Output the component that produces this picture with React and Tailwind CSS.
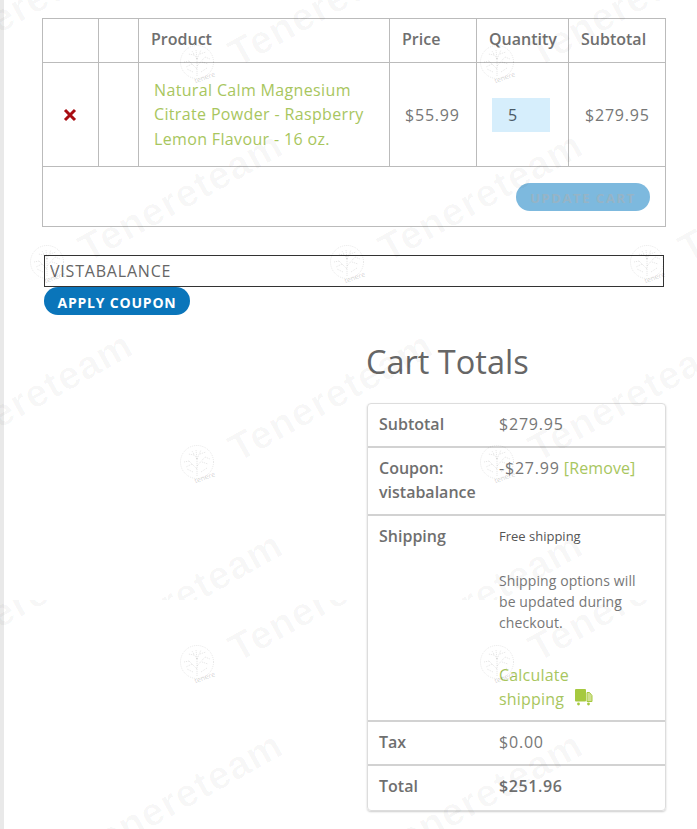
const FONT = { fontFamily: '"Open Sans", sans-serif' }

// watermark tiles are clipped at y=600 in the reference
const TEXT_TOP = [[-70, 55], [230, 55], [530, 55], [80, 250], [380, 250], [680, 250], [-70, 450], [230, 450], [530, 450], [80, 650], [380, 650]]
const TEXT_BOTTOM = [[-70, 650], [230, 650], [530, 650], [80, 850], [380, 850]]
const SEALS = [[197, 62], [497, 62], [47, 262], [347, 262], [647, 262], [197, 462], [497, 462], [197, 662], [497, 662]]

function WatermarkText({ x, y, clipTop = 0 }) {
  return (
    <span
      className="absolute origin-bottom-left -rotate-[29deg] whitespace-nowrap text-[39px] leading-none font-bold tracking-[1px] text-black/[0.03]"
      style={{ left: x + 11, top: y - 21 - clipTop, fontFamily: '"Liberation Sans", sans-serif' }}
    >
      Tenereteam
    </span>
  )
}

function Seal({ x, y }) {
  return (
    <div className="absolute h-[44px] w-[40px]" style={{ left: x - 17, top: y - 17 }}>
      <svg width="34" height="34" viewBox="0 0 34 34" fill="none" stroke="#000" strokeOpacity="0.16" strokeWidth="0.6">
        <circle cx="17" cy="17" r="16.5" strokeDasharray="1 1" />
        <path
          d="M17 31V14M17 24l-8-8M17 21l8-9M17 14l-5-8M17 14l4-9M9 16l-5 1M25 12l5 2M13 27l-6-3M21 27l6-4M12 19l-6 3M22 17l6 2M14 10l-6-1M20 9l6-2M17 14l-1-9"
          strokeDasharray="1.2 0.8"
        />
      </svg>
      <span className="absolute top-[29px] left-[14px] -rotate-[20deg] text-[7px] leading-none text-black/20">tenere</span>
    </div>
  )
}

function Watermarks() {
  return (
    <div className="pointer-events-none absolute inset-0 overflow-hidden">
      <div className="absolute top-0 left-0 h-[600px] w-full overflow-hidden">
        {TEXT_TOP.map(([x, y]) => <WatermarkText key={`${x}-${y}`} x={x} y={y} />)}
      </div>
      <div className="absolute top-[600px] left-0 h-[229px] w-full overflow-hidden">
        {TEXT_BOTTOM.map(([x, y]) => <WatermarkText key={`${x}-${y}`} x={x} y={y} clipTop={600} />)}
      </div>
      {SEALS.map(([x, y]) => <Seal key={`${x}-${y}`} x={x} y={y} />)}
    </div>
  )
}

function TruckIcon() {
  return (
    <svg className="ml-[6px] inline-block align-[-1px]" width="18" height="17" viewBox="0 0 18 17">
      <rect x="0" y="0" width="11" height="12.5" rx="1" fill="#a6c93f" />
      <path d="M12 3.5h2.5L17 6.5v6h-5z" fill="#cfe08f" stroke="#a6c93f" strokeWidth="1" />
      <circle cx="3.5" cy="15" r="1.4" fill="#a6c93f" />
      <circle cx="13.5" cy="15" r="1.4" fill="#a6c93f" />
    </svg>
  )
}

function CartTable() {
  const th = 'border-[1.5px] border-[#bbb] pb-[3px] text-left font-semibold text-[16px] text-[#6f6f6f] align-middle'
  const td = 'border-[1.5px] border-[#bbb] align-middle text-[16px] text-[#777]'
  return (
    <table className="ml-[42px] w-[623px] table-fixed border-collapse">
      <colgroup>
        <col className="w-[56px]" />
        <col className="w-[40px]" />
        <col className="w-[251px]" />
        <col className="w-[87px]" />
        <col className="w-[92px]" />
        <col className="w-[97px]" />
      </colgroup>
      <thead>
        <tr className="h-[44px]">
          <th className={th}></th>
          <th className={th}></th>
          <th className={`${th} pl-3`}>Product</th>
          <th className={`${th} pl-3`}>Price</th>
          <th className={`${th} pl-3`}>Quantity</th>
          <th className={`${th} pl-3`}>Subtotal</th>
        </tr>
      </thead>
      <tbody>
        <tr className="h-[104px]">
          <td className={`${td} pr-[2px] text-center`}>
            <svg className="mx-auto" width="14" height="14" viewBox="0 0 14 14" stroke="#a80d12" strokeWidth="3" fill="none">
              <path d="M2 2l10 10M12 2L2 12" />
            </svg>
          </td>
          <td className={td}></td>
          <td className={`${td} pl-[15px] pr-2 leading-[24.5px] tracking-[0.35px] text-[#a8c65e]`}>
            Natural Calm Magnesium Citrate Powder - Raspberry Lemon Flavour - 16 oz.
          </td>
          <td className={`${td} pl-[15px] tracking-[0.8px]`}>$55.99</td>
          <td className={`${td} pl-[15px]`}>
            <input
              readOnly
              value="5"
              className="block h-[34px] w-[58px] bg-[#d6eefc] pl-4 text-[16px] text-[#4b5a66] outline-none"
            />
          </td>
          <td className={`${td} pl-4 tracking-[0.8px]`}>$279.95</td>
        </tr>
        <tr className="h-[60px]">
          <td colSpan={6} className="border-[1.5px] border-[#bbb] pr-[15px] align-middle">
            <div className="flex justify-end">
              <button className="h-[28px] w-[134px] rounded-full bg-[#7db9de] pt-[4px] text-[13px] font-bold tracking-[1.6px] text-[#96b4c6]">
                UPDATE CART
              </button>
            </div>
          </td>
        </tr>
      </tbody>
    </table>
  )
}

function CouponForm() {
  return (
    <div className="mt-[28px] ml-[44px] flex flex-col items-start">
      <input
        readOnly
        value="VISTABALANCE"
        className="block h-[32px] w-[620px] border border-[#333] bg-white pl-[5px] text-[16px] tracking-[0.8px] text-[#666] outline-none"
      />
      <button className="h-[28px] w-[146px] rounded-full bg-[#0a75ba] pt-[2px] text-[14px] font-bold tracking-[0.8px] text-white">
        APPLY COUPON
      </button>
    </div>
  )
}

function TotalRow({ label, height, children, last }) {
  return (
    <div className={`flex pt-2 ${last ? '' : 'border-b-2 border-[#d2d2d2]'}`} style={{ height }}>
      <div className="w-[131px] pl-[11px] text-[16px] leading-[24px] font-semibold text-[#6f6f6f]">{label}</div>
      <div className="flex-1 text-[16px] leading-[24px] text-[#777]">{children}</div>
    </div>
  )
}

function CartTotals() {
  return (
    <div className="mt-[28px] ml-[367px] w-[299px]">
      <h2 className="-ml-px text-[32.5px] leading-[38px] text-[#666]">Cart Totals</h2>
      <div className="mt-[22px] rounded-[4px] border border-[#ddd] shadow-[0_1px_2px_rgba(0,0,0,0.2)]">
        <TotalRow label="Subtotal" height={44}><span className="tracking-[0.8px]">$279.95</span></TotalRow>
        <TotalRow label={<>Coupon:<br />vistabalance</>} height={68}>
          <span className="tracking-[0.8px]">-$27.99</span> <span className="tracking-[0.1px] text-[#a8c65e]">[Remove]</span>
        </TotalRow>
        <TotalRow label="Shipping" height={206}>
          <div className="text-[13px] text-[#555]">Free shipping</div>
          <div className="mt-[22px] w-[150px] text-[14px] leading-[21px] tracking-[0.1px] text-[#777]">
            Shipping options will be updated during checkout.
          </div>
          <div className="mt-[30px] w-[120px] leading-[24px] tracking-[0.2px] text-[#a8c65e]">
            Calculate shipping <TruckIcon />
          </div>
        </TotalRow>
        <TotalRow label="Tax" height={44}><span className="tracking-[0.8px]">$0.00</span></TotalRow>
        <TotalRow label="Total" height={44} last><span className="font-semibold tracking-[0.6px] text-[#6f6f6f]">$251.96</span></TotalRow>
      </div>
    </div>
  )
}

export default function App() {
  return (
    <div className="relative h-[829px] w-[697px] overflow-hidden bg-white pt-[18px]" style={FONT}>
      <div className="absolute top-0 bottom-0 left-0 w-[4px] bg-[#e9e9e9]" />
      <CartTable />
      <CouponForm />
      <CartTotals />
      <Watermarks />
    </div>
  )
}
